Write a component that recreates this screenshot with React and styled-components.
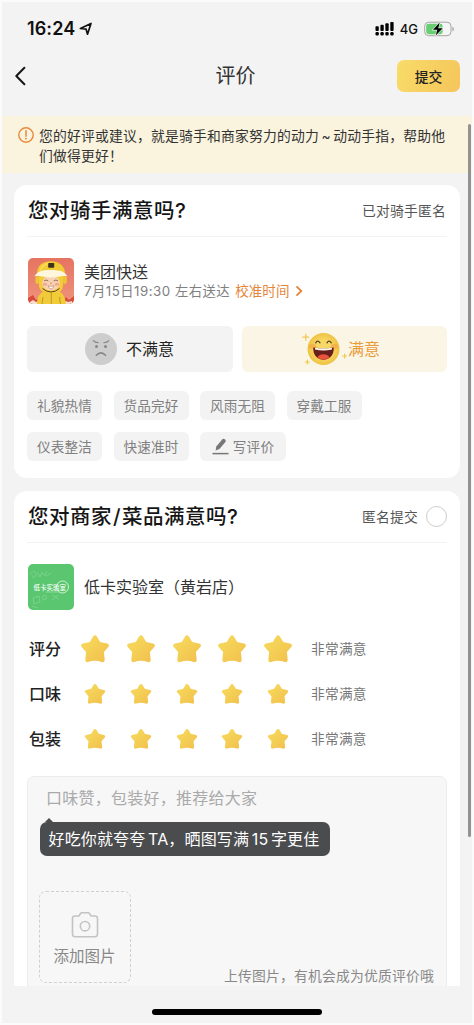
import React, { useState } from "react"
import styled, { createGlobalStyle } from "styled-components"

const GlobalStyle = createGlobalStyle`
    * {
        box-sizing: border-box;
    }
    body {
        margin: 0;
        background: #fff;
        font-family: Inter, "Noto Sans CJK SC", sans-serif;
    }
    button {
        font-family: inherit;
        border: none;
        padding: 0;
        margin: 0;
    }
`

const Page = styled.div`
    width: 474px;
    height: 1025px;
    padding: 2px;
    background: #fbfbfb;
`

const Screen = styled.div`
    position: relative;
    display: flex;
    flex-direction: column;
    height: 1021px;
    background: #f3f3f3;
    overflow: hidden;
`

const Text = styled.span`
    font-size: ${props => props.$size || 14}px;
    font-weight: ${props => props.$weight || 400};
    color: ${props => props.$color || "#333"};
    letter-spacing: ${props => props.$track || 0}px;
    word-spacing: ${props => props.$space || 0}px;
    line-height: ${props => props.$line || 20}px;
    white-space: nowrap;
`

const StatusBar = styled.div`
    display: flex;
    align-items: center;
    height: 53px;
    flex-shrink: 0;
    padding: 0 17px 0 25px;
`

const StatusRight = styled.div`
    display: flex;
    align-items: center;
    gap: 6px;
    margin-left: auto;
`

const NavBar = styled.div`
    display: grid;
    grid-template-columns: 1fr auto 1fr;
    align-items: center;
    height: 41px;
    flex-shrink: 0;
    margin-bottom: 20px;
    padding: 0 12px;
`

const NavTitle = styled(Text)`
    margin-right: 3px;
`

const SubmitButton = styled.button`
    justify-self: end;
    width: 63px;
    height: 32px;
    border-radius: 7px;
    background: linear-gradient(110deg, #f8dc68, #f5c55b);
    font-size: 13.8px;
    font-weight: 500;
    color: #222;
`

const Notice = styled.div`
    display: flex;
    gap: 5px;
    height: 57px;
    flex-shrink: 0;
    padding: 10px 16px;
    background: #faf4df;
`

const NoticeText = styled.p`
    margin: 0;
    width: 412px;
    font-size: 13.8px;
    letter-spacing: 0.2px;
    word-spacing: -1.6px;
    line-height: 20.3px;
    color: #333;
    white-space: pre-line;
`

const Content = styled.div`
    display: flex;
    flex-direction: column;
    gap: 13px;
    height: 813px;
    flex-shrink: 0;
    padding: 12px 12px 0;
    overflow: hidden;
`

const Card = styled.section`
    height: ${props => props.$height}px;
    flex-shrink: 0;
    padding: 0 13px;
    background: #fff;
    border-radius: ${props => props.$open ? "13px 13px 0 0" : "13px"};
`

const CardHeader = styled.header`
    display: flex;
    align-items: center;
    justify-content: space-between;
    height: 52px;
    padding: 0 1px;
    border-bottom: 1px solid #f2f2f2;
`

const Slash = styled.span`
    margin: 0 1px;
`

const AnonymousToggle = styled.button`
    display: flex;
    align-items: center;
    gap: 8px;
    margin-right: -1px;
    background: none;
`

const Radio = styled.span`
    width: 21px;
    height: 21px;
    border: 1px solid #ccc;
    border-radius: 50%;
    background: ${props => props.$on ? "#f7ce57" : "#fff"};
`

const Profile = styled.div`
    display: flex;
    align-items: center;
    gap: 10px;
    height: 46px;
    margin: 21px 1px 0;
`

const ProfileInfo = styled.div`
    display: flex;
    flex-direction: column;
`

const DeliveryLine = styled.div`
    display: flex;
    align-items: center;
    height: 18px;
`

const AdjustTime = styled.span`
    display: flex;
    align-items: center;
    gap: 5px;
    margin-left: 5px;
`

const Choices = styled.div`
    display: grid;
    grid-template-columns: 206px 205px;
    gap: 9px;
    margin-top: 22px;
`

const Choice = styled.button`
    display: flex;
    align-items: center;
    justify-content: center;
    height: 46px;
    border-radius: 6px;
    background: ${props => props.$happy ? "#fbf5e6" : "#f3f3f3"};
    gap: ${props => props.$happy ? 1 : 9}px;
    padding-right: ${props => props.$happy ? 8 : 1}px;
`

const Tags = styled.div`
    display: flex;
    flex-wrap: wrap;
    gap: 12px 11.5px;
    margin-top: 19px;
`

const Tag = styled.button`
    display: flex;
    align-items: center;
    justify-content: center;
    gap: 4px;
    width: ${props => props.$wide ? 86 : 75}px;
    height: 29px;
    border-radius: 6px;
    background: #f3f3f3;
`

const RatingRows = styled.div`
    display: flex;
    flex-direction: column;
    margin-top: 17px;
    padding-left: 2px;
`

const RatingRow = styled.div`
    display: flex;
    align-items: center;
    height: 44.7px;
`

const Stars = styled.div`
    display: grid;
    grid-template-columns: repeat(5, 45.8px);
    justify-items: center;
    margin: 0 10px 0 11px;
`

const Comment = styled.div`
    display: flex;
    flex-direction: column;
    height: 230px;
    margin-top: 15px;
    padding: 11px 12px 0;
    border: 1px solid #ececec;
    border-radius: 7px;
    background: #f7f7f7;
`

const Placeholder = styled.div`
    height: 34px;
    padding-left: 6px;
`

const Tip = styled.div`
    position: relative;
    width: 290px;
    height: 34px;
    margin-left: -0.5px;
    padding-left: 9px;
    display: flex;
    align-items: center;
    border-radius: 7px;
    background: #4b4c4e;

    &::before {
        content: "";
        position: absolute;
        left: 5px;
        top: -4px;
        border: 4px solid transparent;
        border-top: none;
        border-bottom-color: #4b4c4e;
    }
`

const UploadRow = styled.div`
    display: flex;
    align-items: flex-end;
    justify-content: space-between;
    margin-top: 35px;
`

const Upload = styled.button`
    display: flex;
    flex-direction: column;
    align-items: center;
    gap: 8px;
    width: 92px;
    height: 92px;
    margin-left: -1px;
    padding: 19px 1px 0 0;
    background: none;
    border: 1px dashed #d0d0d0;
    border-radius: 7px;
`

const UploadHint = styled(Text)`
    margin-bottom: -3px;
`

const ScrollThumb = styled.div`
    position: absolute;
    top: 122px;
    right: 1px;
    width: 3px;
    height: 713px;
    border-radius: 2px;
    background: #929292;
`

const HomeIndicator = styled.div`
    width: 170px;
    height: 6px;
    margin: 23px auto 0;
    border-radius: 3px;
    background: #000;
`

const tags = ["礼貌热情", "货品完好", "风雨无阻", "穿戴工服", "仪表整洁", "快速准时"]

const ratings = [
    { label: "评分", size: 30 },
    { label: "口味", size: 22 },
    { label: "包装", size: 22 },
]

function LocationIcon(){
    return(
        <svg width="14" height="14" viewBox="0 0 14 14" style={{ marginLeft: 4 }}>
            <path d="M1.4 6.5 12 1.5 8.5 12.2 7.1 7.2Z" fill="none" stroke="#111" strokeWidth="1.7" strokeLinejoin="round" />
        </svg>
    )
}

function SignalIcon(){
    return(
        <svg width="19" height="16" viewBox="0 0 20 16">
            {[0, 1, 2, 3].map(i => (
                <g key={i}>
                    <rect x={0.5 + i * 5.2} y={5 - i * 1.5} width="3.5" height={5 + i * 1.5} rx="1" />
                    <rect x={0.5 + i * 5.2} y="11.2" width="3.5" height="3.7" rx="1.2" />
                </g>
            ))}
        </svg>
    )
}

function BatteryIcon(){
    return(
        <svg width="31" height="16" viewBox="0 0 31 16">
            <rect x="0.7" y="1.2" width="26.3" height="13.5" rx="4" fill="#f5f5f5" stroke="#a5a5a5" />
            <rect x="2.2" y="2.7" width="16.4" height="10.5" rx="2.4" fill="#67cf72" />
            <path d="M28.5 5.7c1.7.6 1.7 4 0 4.6z" fill="#999" />
            <path d="M15.7 1.6 9 8.8h4.3l-1.6 5.8 7-7.4h-4.5z" fill="#000" stroke="#f3f3f3" strokeWidth="1.2" paintOrder="stroke" />
        </svg>
    )
}

function BackIcon(){
    return(
        <svg width="13" height="20" viewBox="0 0 13 20">
            <path d="M10.4 1.8 2.3 10l8.1 8.2" fill="none" stroke="#151515" strokeWidth="2" strokeLinecap="round" strokeLinejoin="round" />
        </svg>
    )
}

function AlertIcon(){
    return(
        <svg width="16" height="17" viewBox="0 0 16 17">
            <circle cx="8" cy="9" r="7.2" fill="none" stroke="#e9883c" strokeWidth="1.4" />
            <path d="M8 4.8v5.4" stroke="#e9883c" strokeWidth="1.5" strokeLinecap="round" />
            <circle cx="8" cy="12.7" r=".9" fill="#e9883c" />
        </svg>
    )
}

function RiderAvatar(){
    return(
        <svg width="46" height="46" viewBox="0 0 46 46">
            <defs>
                <clipPath id="avatarClip"><rect width="46" height="46" rx="5" /></clipPath>
                <linearGradient id="avatarBg" x1="0" y1="0" x2="0" y2="1">
                    <stop offset="0" stopColor="#e57460" />
                    <stop offset="1" stopColor="#f0937c" />
                </linearGradient>
            </defs>
            <g clipPath="url(#avatarClip)">
                <rect width="46" height="46" fill="url(#avatarBg)" />
                <path d="M0 40 5 37 8 42 13 39 15 46H0zM46 38l-5 4-3-3-5 7h13z" fill="#d64c3b" />
                <path d="M2 44l3-2 3 2 4-1 2 3H2zM44 43l-4 1-2-1-3 3h9z" fill="#f7ded0" />
                <path d="M9 46c0-8 3-12 9-13h11c6 1 8 6 9 13z" fill="#f1cb38" />
                <path d="M11 18h25l-1 10c-1 7-6 7-12 7s-11-1-12-7z" fill="#f3cd37" />
                <ellipse cx="9.3" cy="22" rx="2" ry="4" fill="#efc336" />
                <ellipse cx="37" cy="22" rx="2" ry="4" fill="#efc336" />
                <ellipse cx="23" cy="25" rx="8.9" ry="7.4" fill="#f8d2b4" />
                <path d="M9 16C9 7 15 3.3 23 3.3S37 8 37 16z" fill="#f1cb34" />
                <path d="M12 13c2-5 5-7 9-8" fill="none" stroke="#f8dc65" strokeWidth="1.4" />
                <path d="M6.5 18.5C9 13.5 13 12 23 12s14 2 16.5 6.5C34 17 30 19.5 23 19.5S12 17 6.5 18.5z" fill="#fff7dd" />
                <rect x="20.2" y="5" width="6" height="4.7" rx=".7" fill="#3e311e" />
                <path d="M16 23q2.2-2 4.3 0M25.7 23q2.2-2 4.3 0" fill="none" stroke="#795137" strokeWidth=".8" />
                <ellipse cx="17" cy="26.3" rx="2.2" ry="1.5" fill="#f1a78c" />
                <ellipse cx="29" cy="26.3" rx="2.2" ry="1.5" fill="#f1a78c" />
                <circle cx="23" cy="25.3" r="1.1" fill="#e9a184" />
                <path d="M20 27.7q3 1.5 6 0-1 3.2-3 3.2t-3-3.2z" fill="#fff" stroke="#b4674e" strokeWidth=".5" />
                <path d="M14.5 30.5q8.5 7 17 0" fill="none" stroke="#594324" strokeWidth="1" />
                <path d="M23.3 35v11M15 39l-1 7M31.5 39l1 7" stroke="#987626" strokeWidth=".6" />
            </g>
        </svg>
    )
}

function ShopLogo(){
    return(
        <svg width="46" height="46" viewBox="0 0 46 46">
            <rect width="46" height="46" rx="5" fill="#5bc670" />
            <g fill="none" stroke="#7bd28a" strokeWidth="1">
                <path d="M2 10c3-4 6-3 6 1s-4 3-4 0M9 8l3 5 2-5 3 4 2-5M19 12l4-3M5 34l6-2 1 6-6 2zM4 42l6 2M14 33l3-2 2 3-3 2zM24 31l7 4M24 36l6-5" />
            </g>
            <circle cx="34.5" cy="23" r="6" fill="none" stroke="#d9f5de" strokeWidth=".9" />
            <text x="5.5" y="25.5" fontSize="6.5" fontWeight="500" fill="#f5fff6">低卡实验室</text>
            <path d="M18 28h13" stroke="#a9e3b3" strokeWidth=".7" />
        </svg>
    )
}

function SadFace(){
    return(
        <svg width="32" height="32" viewBox="0 0 32 32">
            <circle cx="16" cy="16" r="16" fill="#cdcdcd" />
            <g fill="none" stroke="#858585" strokeLinecap="round">
                <path d="M8.3 7.7q1.6 2 5 2M23.8 7.7q-1.6 2-5 2" strokeWidth="1.1" />
                <path d="M11.3 22.2q4.7-4.6 9.2 0" strokeWidth="1.6" />
            </g>
            <circle cx="11.5" cy="13.6" r="1.5" fill="#858585" />
            <circle cx="20.5" cy="13.6" r="1.5" fill="#858585" />
        </svg>
    )
}

function HappyFace(){
    return(
        <svg width="46" height="36" viewBox="0 0 46 36">
            <defs>
                <radialGradient id="faceFill">
                    <stop offset=".5" stopColor="#f8d865" />
                    <stop offset="1" stopColor="#efc344" />
                </radialGradient>
            </defs>
            <circle cx="22.5" cy="18" r="16" fill="url(#faceFill)" />
            <ellipse cx="11.5" cy="15.5" rx="3.8" ry="2.7" fill="#f4a646" opacity=".65" />
            <ellipse cx="33.5" cy="15.5" rx="3.8" ry="2.7" fill="#f4a646" opacity=".65" />
            <path d="M14.7 11.8q2-3.2 4.3 0M26 11.8q2-3.2 4.3 0" fill="none" stroke="#544327" strokeWidth="1.3" strokeLinecap="round" />
            <path d="M12.3 16.4q10.2 1.6 20.4 0c.5 7-3.8 12.3-10.2 12.3S11.8 23.4 12.3 16.4z" fill="#681e1b" />
            <path d="M14 16.7q8.5 1.1 17 0v1.8q-8.5 2-17 0z" fill="#fff7e9" />
            <path d="M16.4 26.2c2.1-4.1 10-4.1 12.2 0-3.2 3.2-8.8 3.2-12.2 0z" fill="#e9533d" />
            <g stroke="#f2c84f" strokeWidth="1.2" strokeLinecap="round">
                <path d="M4.8 3.2v6M1.8 6.2h6M6.4 29v4M4.4 31h4M43.6 23v4M41.6 25h4" />
            </g>
        </svg>
    )
}

function PenIcon(){
    return(
        <svg width="17" height="17" viewBox="0 0 17 17">
            <path d="M3.6 12.4 4.3 8.6 10.2 1.5q1.3-1.3 2.8-.1t.4 2.7L7.4 11z" fill="#777" />
            <path d="M.5 15.6h16" stroke="#777" strokeWidth="1.5" />
        </svg>
    )
}

function Star({ size }){
    return(
        <svg width={size} height={size} viewBox="0 0 30 30">
            <defs>
                <linearGradient id="starFill" x1="0" y1="0" x2="1" y2="1">
                    <stop offset="0" stopColor="#f7dc5e" />
                    <stop offset="1" stopColor="#f1bf4c" />
                </linearGradient>
            </defs>
            <path
                d="M13.1 2.4Q15 .1 16.9 2.4L20.2 8l6.8 1.5q3.1.9 1.3 3.4L23.9 18l.8 7.8q0 3.1-2.9 2.2Q15 25.7 8.2 28q-2.9.9-2.9-2.2L6.1 18l-4.4-5.1Q-.1 10.4 3 9.5L9.8 8z"
                fill="url(#starFill)"
            />
        </svg>
    )
}

function CameraIcon(){
    return(
        <svg width="28" height="28" viewBox="0 0 28 28" fill="none" stroke="#c4c4c4" strokeWidth="1.6">
            <path d="M4 5h4l1.7-2.7q.4-.6 1.1-.6h6.4q.7 0 1.1.6L20 5h4q2.5 0 2.5 2.5v15.6q0 2.7-2.7 2.7H4.2q-2.7 0-2.7-2.7V7.5Q1.5 5 4 5z" />
            <circle cx="14" cy="15.2" r="4.7" />
        </svg>
    )
}

function App(){

    const [anonymous, setAnonymous] = useState(false)

    const displayTags = tags.map(tag => (
        <Tag key={tag}>
            <Text $size={13.6} $track={0.2} $color="#808080">{tag}</Text>
        </Tag>
    ))

    const displayRatings = ratings.map(rating => (
        <RatingRow key={rating.label}>
            <Text $size={16} $weight={500} $color="#222">{rating.label}</Text>
            <Stars>
                {[1, 2, 3, 4, 5].map(n => <Star key={n} size={rating.size} />)}
            </Stars>
            <Text $size={13.7} $track={0.25} $color="#777">非常满意</Text>
        </RatingRow>
    ))

    return(
        <Page>
            <GlobalStyle />
            <Screen>
                <StatusBar>
                    <Text $size={18} $weight={600} $track={0.1} $color="#111">16:24</Text>
                    <LocationIcon />
                    <StatusRight>
                        <SignalIcon />
                        <Text $size={13} $weight={500} $color="#111">4G</Text>
                        <BatteryIcon />
                    </StatusRight>
                </StatusBar>

                <NavBar>
                    <BackIcon />
                    <NavTitle $size={20} $line={28}>评价</NavTitle>
                    <SubmitButton>提交</SubmitButton>
                </NavBar>

                <Notice>
                    <AlertIcon />
                    <NoticeText>
                        {"您的好评或建议，就是骑手和商家努力的动力 ~ 动动手指，帮助他\n们做得更好！"}
                    </NoticeText>
                </Notice>

                <Content>
                    <Card $height={293}>
                        <CardHeader>
                            <Text $size={20.5} $weight={500} $track={0.5} $line={30} $color="#151515">您对骑手满意吗?</Text>
                            <Text $size={13.8} $track={0.2} $color="#555">已对骑手匿名</Text>
                        </CardHeader>

                        <Profile>
                            <RiderAvatar />
                            <ProfileInfo>
                                <Text $size={16}>美团快送</Text>
                                <DeliveryLine>
                                    <Text $size={13.3} $track={0.5} $color="#808080">7月15日19:30 左右送达</Text>
                                    <AdjustTime>
                                        <Text $size={13.5} $track={0.1} $color="#e5853a">校准时间</Text>
                                        <svg width="8" height="12" viewBox="0 0 8 12">
                                            <path d="M1.5 1.3 6.3 6l-4.8 4.7" fill="none" stroke="#e5853a" strokeWidth="1.8" />
                                        </svg>
                                    </AdjustTime>
                                </DeliveryLine>
                            </ProfileInfo>
                        </Profile>

                        <Choices>
                            <Choice>
                                <SadFace />
                                <Text $size={16} $color="#222">不满意</Text>
                            </Choice>
                            <Choice $happy>
                                <HappyFace />
                                <Text $size={16} $color="#e99b37">满意</Text>
                            </Choice>
                        </Choices>

                        <Tags>
                            {displayTags}
                            <Tag $wide>
                                <PenIcon />
                                <Text $size={13.6} $track={0.2} $color="#808080">写评价</Text>
                            </Tag>
                        </Tags>
                    </Card>

                    <Card $height={520} $open>
                        <CardHeader>
                            <Text $size={20.5} $weight={500} $track={0.5} $line={30} $color="#151515">
                                您对商家<Slash>/</Slash>菜品满意吗?
                            </Text>
                            <AnonymousToggle onClick={() => setAnonymous(!anonymous)}>
                                <Text $size={13.8} $track={0.2} $color="#555">匿名提交</Text>
                                <Radio $on={anonymous} />
                            </AnonymousToggle>
                        </CardHeader>

                        <Profile>
                            <ShopLogo />
                            <Text $size={16}>低卡实验室（黄岩店）</Text>
                        </Profile>

                        <RatingRows>{displayRatings}</RatingRows>

                        <Comment>
                            <Placeholder>
                                <Text $size={16} $track={0.25} $color="#aaa">口味赞，包装好，推荐给大家</Text>
                            </Placeholder>
                            <Tip>
                                <Text $size={16} $track={0.15} $space={-2} $color="#fff">好吃你就夸夸 TA，晒图写满 15 字更佳</Text>
                            </Tip>
                            <UploadRow>
                                <Upload>
                                    <CameraIcon />
                                    <Text $size={15.5} $color="#888">添加图片</Text>
                                </Upload>
                                <UploadHint $size={13.8} $track={0.2} $color="#888">上传图片，有机会成为优质评价哦</UploadHint>
                            </UploadRow>
                        </Comment>
                    </Card>
                </Content>

                <HomeIndicator />
                <ScrollThumb />
            </Screen>
        </Page>
    )
}

export default App
